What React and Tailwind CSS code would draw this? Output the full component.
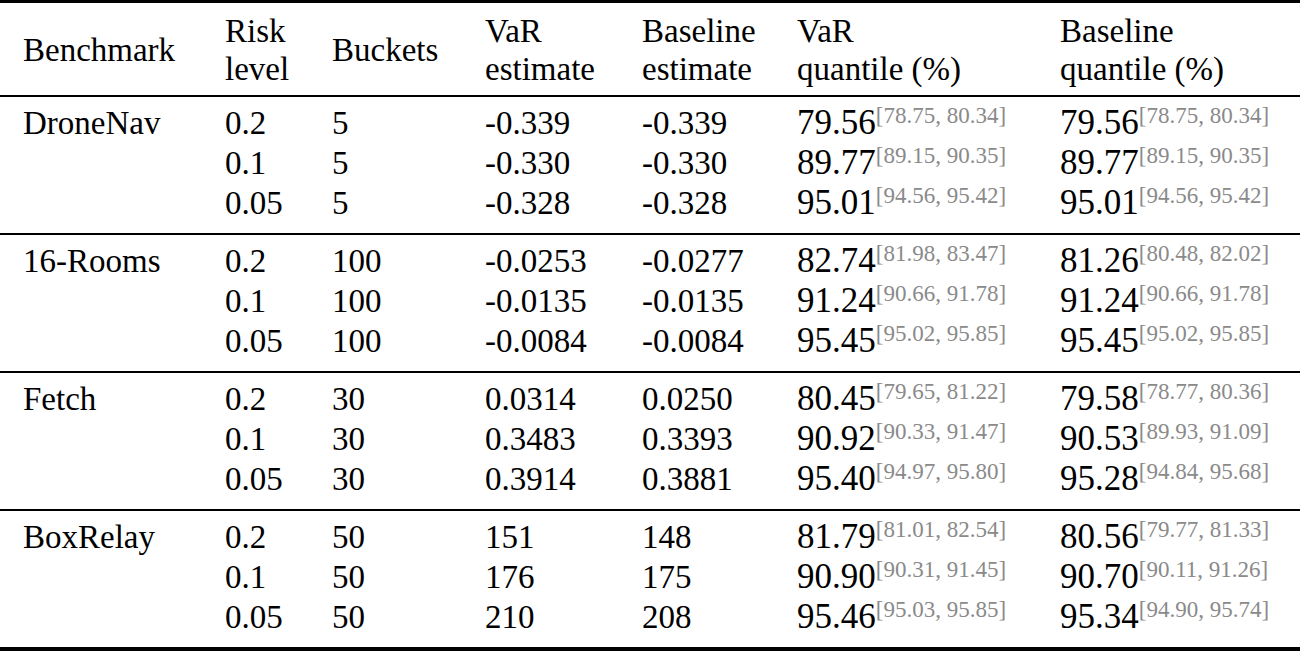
import React from 'react'

const groups = [
  {
    name: 'DroneNav',
    rows: [
      ['0.2', '5', '-0.339', '-0.339', ['79.56', '[78.75, 80.34]'], ['79.56', '[78.75, 80.34]']],
      ['0.1', '5', '-0.330', '-0.330', ['89.77', '[89.15, 90.35]'], ['89.77', '[89.15, 90.35]']],
      ['0.05', '5', '-0.328', '-0.328', ['95.01', '[94.56, 95.42]'], ['95.01', '[94.56, 95.42]']],
    ],
  },
  {
    name: '16-Rooms',
    rows: [
      ['0.2', '100', '-0.0253', '-0.0277', ['82.74', '[81.98, 83.47]'], ['81.26', '[80.48, 82.02]']],
      ['0.1', '100', '-0.0135', '-0.0135', ['91.24', '[90.66, 91.78]'], ['91.24', '[90.66, 91.78]']],
      ['0.05', '100', '-0.0084', '-0.0084', ['95.45', '[95.02, 95.85]'], ['95.45', '[95.02, 95.85]']],
    ],
  },
  {
    name: 'Fetch',
    rows: [
      ['0.2', '30', '0.0314', '0.0250', ['80.45', '[79.65, 81.22]'], ['79.58', '[78.77, 80.36]']],
      ['0.1', '30', '0.3483', '0.3393', ['90.92', '[90.33, 91.47]'], ['90.53', '[89.93, 91.09]']],
      ['0.05', '30', '0.3914', '0.3881', ['95.40', '[94.97, 95.80]'], ['95.28', '[94.84, 95.68]']],
    ],
  },
  {
    name: 'BoxRelay',
    rows: [
      ['0.2', '50', '151', '148', ['81.79', '[81.01, 82.54]'], ['80.56', '[79.77, 81.33]']],
      ['0.1', '50', '176', '175', ['90.90', '[90.31, 91.45]'], ['90.70', '[90.11, 91.26]']],
      ['0.05', '50', '210', '208', ['95.46', '[95.03, 95.85]'], ['95.34', '[94.90, 95.74]']],
    ],
  },
]

const cols = 'grid grid-cols-[225px_107px_153px_157px_155px_263px_240px]'

const Quantile = ({ value }) => (
  <span className="whitespace-nowrap">
    <span className="text-[35px]">{value[0]}</span>
    <span className="text-[23px] leading-none text-[#8a8a8a] align-[11px]">{value[1]}</span>
  </span>
)

export default function App() {
  return (
    <div className="w-[1300px] bg-white text-black font-['Liberation_Serif','Times_New_Roman',serif] text-[33px] leading-[40px]">
      {/* header */}
      <div className={`${cols} items-center border-t-[3px] border-b-2 border-black pt-[9px] pb-[7px] leading-[38px]`}>
        <div className="pl-[23px]">Benchmark</div>
        <div>Risk<br />level</div>
        <div>Buckets</div>
        <div>VaR<br />estimate</div>
        <div>Baseline<br />estimate</div>
        <div>VaR<br />quantile (%)</div>
        <div>Baseline<br />quantile (%)</div>
      </div>

      {groups.map((g, gi) => (
        <div
          key={g.name}
          className={`pt-[6px] pb-[10px] border-black ${gi === groups.length - 1 ? 'border-b-4' : 'border-b-2'}`}
        >
          {g.rows.map((r, ri) => (
            <div key={ri} className={`${cols} h-[40px] whitespace-nowrap`}>
              <div className="pl-[23px]">{ri === 0 ? g.name : ''}</div>
              <div>{r[0]}</div>
              <div>{r[1]}</div>
              <div>{r[2]}</div>
              <div>{r[3]}</div>
              <div><Quantile value={r[4]} /></div>
              <div><Quantile value={r[5]} /></div>
            </div>
          ))}
        </div>
      ))}
    </div>
  )
}
